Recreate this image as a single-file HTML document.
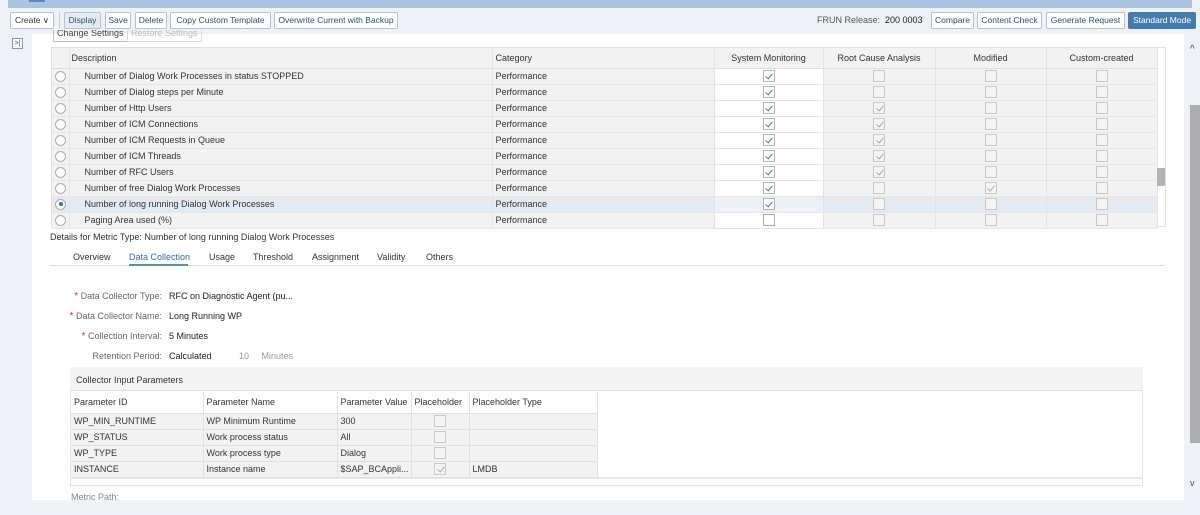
<!DOCTYPE html>
<html><head><meta charset="utf-8"><style>
*{box-sizing:border-box;margin:0;padding:0}
body{width:1200px;height:515px;overflow:hidden;background:#eef2f7;font-family:"Liberation Sans",sans-serif;font-size:9px;color:#333;position:relative}
.a{position:absolute}
.btn{position:absolute;top:12px;height:17px;border:1px solid #b8c2cc;background:#fff;border-radius:2px;font-size:8.5px;line-height:15px;padding:0;text-align:center;color:#2d4f73;white-space:nowrap;overflow:hidden}
.cb{display:inline-block;width:12px;height:12px;border:1px solid #c8c8c8;background:#f4f4f4;position:relative;vertical-align:middle}
.cb.w{background:#fff;border-color:#aaa}
.cb.k{background:#fff;border-color:#b5b5b5}
.cb.k::after{content:"";position:absolute;left:3.5px;top:1px;width:3px;height:6px;border:solid #3f76b8;border-width:0 1.5px 1.5px 0;transform:rotate(40deg)}
.cb.g::after{content:"";position:absolute;left:3.5px;top:1px;width:3px;height:6px;border:solid #aaa;border-width:0 1.2px 1.2px 0;transform:rotate(40deg)}
table{border-collapse:collapse}
.mt td{height:16px;border-right:1px solid #e3e3e3;border-bottom:1px solid #e6e6e6;background:#f2f2f2;font-size:9px;padding:0}
.mt td.sm{background:#fff;text-align:center}
.mt td.c{text-align:center}
.mt tr.sel td{background:#e4eaf1}
.mt tr.sel td.sm{background:#ecf1f7}
.mt th{height:20px;font-weight:normal;background:#f2f2f2;border-right:1px solid #e3e3e3;border-bottom:1px solid #ddd;font-size:9px;color:#333}
.rad{display:inline-block;width:11px;height:11px;border:1px solid #aaa;border-radius:50%;background:#fff;position:relative;margin-left:3px;vertical-align:middle}
.rad.on::after{content:"";position:absolute;left:2.5px;top:2.5px;width:4px;height:4px;border-radius:50%;background:#3a6fa8}
.pt td,.pt th{height:16px;border-right:1px solid #e0e0e0;border-bottom:1px solid #e0e0e0;background:#f2f2f2;padding:0 3px;font-size:9px;font-weight:normal;text-align:left;color:#333}
.pt th{height:21px;background:#fff;color:#333}
.lbl{position:absolute;font-size:9px;color:#666;text-align:right;width:100px}
.star{color:#c33;font-size:10px}
.val{position:absolute;font-size:9px;color:#222}
</style></head><body>
<div class="a" style="left:8px;top:0;width:1184px;height:8px;background:#a9c4de"></div>
<div class="a" style="left:29px;top:0;width:16px;height:2px;background:#5d8bc0"></div>

<div class="btn" style="left:10px;width:44px;color:#333">Create ∨</div>
<div class="a" style="left:59px;top:12px;width:1px;height:17px;background:#ccd"></div>
<div class="btn" style="left:64px;width:37px;background:#e6ebf0">Display</div>
<div class="btn" style="left:105px;width:26px">Save</div>
<div class="btn" style="left:135px;width:32px">Delete</div>
<div class="btn" style="left:170px;width:101px">Copy Custom Template</div>
<div class="btn" style="left:274px;width:124px">Overwrite Current with Backup</div>
<div class="a" style="left:817px;top:15px;color:#555">FRUN Release: <span style="color:#222">&nbsp;200 0003</span></div>
<div class="btn" style="left:931px;width:43px">Compare</div>
<div class="btn" style="left:977px;width:65px">Content Check</div>
<div class="btn" style="left:1046px;width:79px">Generate Request</div>
<div class="btn" style="left:1128px;width:68px;background:#427cac;border-color:#427cac;color:#fff">Standard Mode</div>

<div class="a" style="left:12px;top:38px;width:11px;height:11px;border:1px solid #7f9bbb;background:#fff;font-size:7px;line-height:9px;text-align:center;color:#2d4f73">&gt;|</div>

<div class="a" style="left:32px;top:34px;width:1152px;height:466px;background:#fff"></div>
<div class="a" style="left:1190px;top:105px;width:10px;height:338px;background:#adadad"></div>
<div class="a" style="left:1190px;top:44px;color:#2d4f73;font-size:10px">^</div>
<div class="a" style="left:1190px;top:478px;color:#2d4f73;font-size:9px">v</div>

<div class="a" style="left:53px;top:30px;height:12px;border:1px solid #bbb;border-top:none;font-size:9px;line-height:6px;padding:0 3px;color:#444;overflow:hidden">Change Settings</div>
<div class="a" style="left:127px;top:30px;height:12px;border:1px solid #ddd;border-top:none;font-size:9px;line-height:6px;padding:0 3px;color:#bbb;overflow:hidden">Restore Settings</div>

<div class="a" style="left:51px;top:47px;width:1115px;height:180px;border:1px solid #e0e0e0;background:#fff"></div>
<table class="mt a" style="left:52px;top:48px;width:1105px;table-layout:fixed">
<colgroup><col style="width:17px"><col style="width:423px"><col style="width:222px"><col style="width:109px"><col style="width:112px"><col style="width:111px"><col style="width:111px"></colgroup>
<tr><th></th><th style="text-align:left;padding-left:2px">Description</th><th style="text-align:left;padding-left:3px">Category</th><th>System Monitoring</th><th>Root Cause Analysis</th><th>Modified</th><th>Custom-created</th></tr>
<tr><td><span class="rad"></span></td><td style="padding-left:15px">Number of Dialog Work Processes in status STOPPED</td><td style="padding-left:3px">Performance</td><td class="sm"><span class="cb k"></span></td><td class="c"><span class="cb"></span></td><td class="c"><span class="cb"></span></td><td class="c"><span class="cb"></span></td></tr>
<tr><td><span class="rad"></span></td><td style="padding-left:15px">Number of Dialog steps per Minute</td><td style="padding-left:3px">Performance</td><td class="sm"><span class="cb k"></span></td><td class="c"><span class="cb"></span></td><td class="c"><span class="cb"></span></td><td class="c"><span class="cb"></span></td></tr>
<tr><td><span class="rad"></span></td><td style="padding-left:15px">Number of Http Users</td><td style="padding-left:3px">Performance</td><td class="sm"><span class="cb k"></span></td><td class="c"><span class="cb g"></span></td><td class="c"><span class="cb"></span></td><td class="c"><span class="cb"></span></td></tr>
<tr><td><span class="rad"></span></td><td style="padding-left:15px">Number of ICM Connections</td><td style="padding-left:3px">Performance</td><td class="sm"><span class="cb k"></span></td><td class="c"><span class="cb g"></span></td><td class="c"><span class="cb"></span></td><td class="c"><span class="cb"></span></td></tr>
<tr><td><span class="rad"></span></td><td style="padding-left:15px">Number of ICM Requests in Queue</td><td style="padding-left:3px">Performance</td><td class="sm"><span class="cb k"></span></td><td class="c"><span class="cb g"></span></td><td class="c"><span class="cb"></span></td><td class="c"><span class="cb"></span></td></tr>
<tr><td><span class="rad"></span></td><td style="padding-left:15px">Number of ICM Threads</td><td style="padding-left:3px">Performance</td><td class="sm"><span class="cb k"></span></td><td class="c"><span class="cb g"></span></td><td class="c"><span class="cb"></span></td><td class="c"><span class="cb"></span></td></tr>
<tr><td><span class="rad"></span></td><td style="padding-left:15px">Number of RFC Users</td><td style="padding-left:3px">Performance</td><td class="sm"><span class="cb k"></span></td><td class="c"><span class="cb g"></span></td><td class="c"><span class="cb"></span></td><td class="c"><span class="cb"></span></td></tr>
<tr><td><span class="rad"></span></td><td style="padding-left:15px">Number of free Dialog Work Processes</td><td style="padding-left:3px">Performance</td><td class="sm"><span class="cb k"></span></td><td class="c"><span class="cb"></span></td><td class="c"><span class="cb g"></span></td><td class="c"><span class="cb"></span></td></tr>
<tr class="sel"><td><span class="rad on"></span></td><td style="padding-left:15px">Number of long running Dialog Work Processes</td><td style="padding-left:3px">Performance</td><td class="sm"><span class="cb k"></span></td><td class="c"><span class="cb"></span></td><td class="c"><span class="cb"></span></td><td class="c"><span class="cb"></span></td></tr>
<tr><td><span class="rad"></span></td><td style="padding-left:15px">Paging Area used (%)</td><td style="padding-left:3px">Performance</td><td class="sm"><span class="cb w"></span></td><td class="c"><span class="cb"></span></td><td class="c"><span class="cb"></span></td><td class="c"><span class="cb"></span></td></tr>
</table>
<div class="a" style="left:1157px;top:168px;width:8px;height:18px;background:#b3b3b3"></div>

<div class="a" style="left:50px;top:232px;color:#333">Details for Metric Type: Number of long running Dialog Work Processes</div>
<div class="a" style="left:50px;top:265px;width:1115px;height:1px;background:#d8e0e8"></div>
<div class="a" style="left:73px;top:252px;color:#333">Overview</div>
<div class="a" style="left:129px;top:252px;color:#3b6a96">Data Collection</div>
<div class="a" style="left:129px;top:264px;width:59px;height:2px;background:#5d8ab5"></div>
<div class="a" style="left:209px;top:252px;color:#333">Usage</div>
<div class="a" style="left:253px;top:252px;color:#333">Threshold</div>
<div class="a" style="left:312px;top:252px;color:#333">Assignment</div>
<div class="a" style="left:377px;top:252px;color:#333">Validity</div>
<div class="a" style="left:426px;top:252px;color:#333">Others</div>

<div class="lbl" style="left:62px;top:291px"><span class="star">*</span> Data Collector Type:</div>
<div class="val" style="left:169px;top:291px">RFC on Diagnostic Agent (pu...</div>
<div class="lbl" style="left:62px;top:311px"><span class="star">*</span> Data Collector Name:</div>
<div class="val" style="left:169px;top:311px">Long Running WP</div>
<div class="lbl" style="left:62px;top:331px"><span class="star">*</span> Collection Interval:</div>
<div class="val" style="left:169px;top:331px">5 Minutes</div>
<div class="lbl" style="left:62px;top:351px">Retention Period:</div>
<div class="val" style="left:169px;top:351px">Calculated</div>
<div class="val" style="left:239px;top:351px;color:#999">10&nbsp;&nbsp;&nbsp;&nbsp;&nbsp;Minutes</div>

<div class="a" style="left:70px;top:367px;width:1073px;height:24px;background:#f4f4f4;border-bottom:1px solid #e0e0e0"></div>
<div class="a" style="left:76px;top:375px;color:#333">Collector Input Parameters</div>
<div class="a" style="left:70px;top:391px;width:1073px;height:95px;border:1px solid #e5e5e5;border-top:none;background:#fff"></div>
<div class="a" style="left:70px;top:477px;width:1073px;height:2px;background:#e6e6e6"></div>
<table class="pt a" style="left:71px;top:392px;table-layout:fixed;width:526px">
<colgroup><col style="width:132px"><col style="width:134px"><col style="width:74px"><col style="width:58px"><col style="width:128px"></colgroup>
<tr><th>Parameter ID</th><th>Parameter Name</th><th>Parameter Value</th><th>Placeholder</th><th>Placeholder Type</th></tr>
<tr><td>WP_MIN_RUNTIME</td><td>WP Minimum Runtime</td><td>300</td><td style="text-align:center"><span class="cb"></span></td><td></td></tr>
<tr><td>WP_STATUS</td><td>Work process status</td><td>All</td><td style="text-align:center"><span class="cb"></span></td><td></td></tr>
<tr><td>WP_TYPE</td><td>Work process type</td><td>Dialog</td><td style="text-align:center"><span class="cb"></span></td><td></td></tr>
<tr><td>INSTANCE</td><td>Instance name</td><td>$SAP_BCAppli...</td><td style="text-align:center"><span class="cb g"></span></td><td>LMDB</td></tr>
</table>
<div class="a" style="left:71px;top:492px;color:#888">Metric Path:</div>
<div class="a" style="left:0;top:500px;width:1200px;height:15px;background:#eef2f7"></div>
</body></html>
